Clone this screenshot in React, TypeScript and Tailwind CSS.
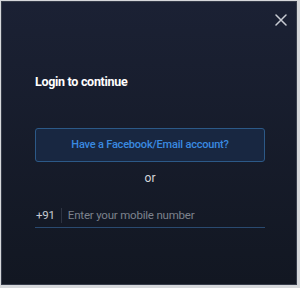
import React from "react";

export default function App() {
  return (
    <div className="w-[300px] h-[288px] bg-[#d6d8db] pt-px pl-px pr-[3px] pb-[3px]" style={{ fontFamily: "Roboto, 'Liberation Sans', sans-serif" }}>
      <div className="relative h-full w-full border border-[#363c4a] bg-gradient-to-b from-[#1b2134] to-[#121722] flex flex-col">
        <button className="absolute right-[9px] top-[12px] text-[#c9ccd3]" aria-label="close">
          <svg width="12" height="12" viewBox="0 0 12 12" fill="none">
            <path d="M1 1L11 11M11 1L1 11" stroke="currentColor" strokeWidth="1.5" strokeLinecap="round" />
          </svg>
        </button>
        <div className="pl-[33px] pr-[31px] pt-[72px]">
          <h2 className="text-[12.5px] font-bold text-white leading-[16px] tracking-[-0.3px]">Login to continue</h2>
          <button className="mt-[38px] w-full h-[34px] rounded-[3px] border border-[#2c5987] bg-[#182741] text-[#3a8ae0] text-[11px] font-medium tracking-[-0.2px]">
            Have a Facebook/Email account?
          </button>
          <div className="mt-[8px] text-center text-[12px] text-[#d4d6db] leading-[16px]">or</div>
          <div className="mt-[21px] flex items-center border-b border-[#2a4a70] pb-[4px]">
            <span className="text-[11.5px] text-[#c7cad1] pl-[1px] leading-[16px] tracking-[-0.2px]">+91</span>
            <span className="mx-[6px] w-px h-[15px] bg-[#2e3442]"></span>
            <span className="text-[11.5px] text-[#7d828d] leading-[16px] tracking-[-0.2px]">Enter your mobile number</span>
          </div>
        </div>
      </div>
    </div>
  );
}
